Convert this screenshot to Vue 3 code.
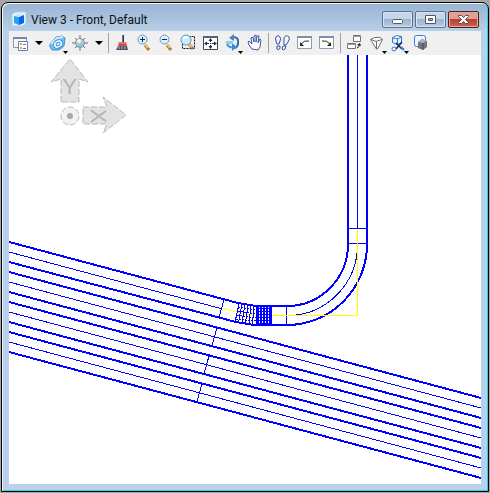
<script setup>
const slope = 126 / 472
const left = 9
const right = 481
const yAt = (start, x) => start + (x - left) * slope

const runs = [272, 302, 332].flatMap((y) => [
  { y, thick: true },
  { y: y + 10, thick: false },
  { y: y + 20, thick: true },
])

const joints = [
  [224, 299, 219, 318],
  [217, 327, 212, 346],
  [209, 356, 204, 374],
  [202, 383, 197, 402],
]

const meshColumns = [258, 261, 264, 267, 270]
const meshRows = [308, 311, 314, 317, 320, 323]
const fan = [0, 1, 2, 3, 4, 5, 6].map((i) => [239 + i * 3, 304 + (i > 2 ? 1 : 0), 235 + i * 3.5, 322 + i / 3])
</script>

<template>
  <main class="window">
    <header class="titlebar">
      <svg class="app-icon" viewBox="0 0 16 16" aria-hidden="true">
        <path d="M1 3 5 1h10v12l-3 2H1z" fill="#e6f3fb" stroke="#a9cfe8" />
        <path d="M3 5 6 3h7l-3 2z" fill="#bfe8ff" />
        <path d="M3 5l5 1v8l-5-2z" fill="#27a2f5" />
        <path d="M8 6l5-2v8l-5 2z" fill="#0969dc" />
      </svg>
      <h1>View 3 - Front, Default</h1>
      <div class="controls">
        <button class="control" aria-label="Minimize">
          <svg viewBox="0 0 28 15"><rect x="9.500" y="7.500" width="10" height="4" rx="1" fill="#fff" stroke="#505866" /></svg>
        </button>
        <button class="control" aria-label="Maximize">
          <svg viewBox="0 0 28 15"><path d="M9.500 3.500h10v8h-10zM12.500 6.500v2h4v-2z" fill="#fff" fill-rule="evenodd" stroke="#505866" /></svg>
        </button>
        <button class="control close" aria-label="Close">
          <svg viewBox="0 0 28 15"><path d="M9.500 3.500h3l2 2 2-2h3v1l-3 3 3 3v1h-3l-2-2-2 2h-3v-1l3-3-3-3z" fill="#fff" stroke="#5c4a55" /></svg>
        </button>
      </div>
    </header>

    <nav class="toolbar" aria-label="View tools">
      <button class="tool" aria-label="View attributes">
        <svg viewBox="0 0 22 24">
          <path d="M4.500 6.500h13v10h-13z" fill="#f5f6fa" stroke="#8c96b4" />
          <path d="M4 6h14v2H4z" fill="#7885aa" />
          <path d="M9.500 10.500h9v9h-9z" fill="#fff" stroke="#7080ad" />
          <path d="M11 12h2v2h-2zM11 16h2v2h-2z" fill="#f2a33a" />
          <path d="M14 13.500h3M14 17.500h3" stroke="#3287d8" />
        </svg>
      </button>
      <button class="tool drop" aria-label="View attributes options">
        <svg viewBox="0 0 15 24"><path d="M4 10h8l-4 4z" fill="#000" /></svg>
      </button>
      <button class="tool" aria-label="Display style">
        <svg viewBox="0 0 22 24">
          <path d="M4 13 10 6l6-1 3 2-1 8-5 4H6l-2-3z" fill="#6fc2f0" stroke="#4a8cc8" />
          <path d="M5 13 11 7l6-1" fill="none" stroke="#c8eeff" stroke-width="2" />
          <ellipse cx="12" cy="13" rx="5" ry="4" transform="rotate(-35 12 13)" fill="#e4f7ff" stroke="#3a93d8" />
          <ellipse cx="12" cy="13" rx="2" ry="1.500" transform="rotate(-35 12 13)" fill="#fff" stroke="#3a93d8" />
          <path d="M17 20h5l-2.500 3z" fill="#000" />
        </svg>
      </button>
      <button class="tool" aria-label="Adjust brightness">
        <svg viewBox="0 0 22 24">
          <path d="M12 4v16M4 12h16M7 7l10 10M17 7 7 17" stroke="#6c7276" />
          <circle cx="12" cy="12" r="4.500" fill="#b3c8d0" stroke="#84939a" />
          <circle cx="11" cy="10" r="2" fill="#f1fbfd" />
          <path d="M10 15q3 1 5-2" fill="none" stroke="#53c2d5" />
        </svg>
      </button>
      <button class="tool drop" aria-label="Brightness options">
        <svg viewBox="0 0 15 24"><path d="M5 10h8l-4 4z" fill="#000" /></svg>
      </button>
      <span class="separator"></span>
      <button class="tool" aria-label="Update view">
        <svg viewBox="0 0 22 24">
          <path d="M11 4h2v8h-2z" fill="#687489" />
          <path d="M12 4h1v8h-1z" fill="#28344a" />
          <path d="M8 11h7l1 4H7z" fill="#d44c42" />
          <path d="M7 12h8" stroke="#f2a098" />
          <path d="M7 15h9l1 4H5z" fill="#4b5666" />
          <path d="M8 15v3M11 15v3M14 15v3" stroke="#a8b2bd" />
        </svg>
      </button>
      <button class="tool" aria-label="Zoom in">
        <svg viewBox="0 0 22 24">
          <path d="m12 14 4 5" stroke="#b5763c" stroke-width="3" />
          <path d="m12 13 3 4" stroke="#f0c273" stroke-width="2" />
          <circle cx="9.500" cy="8.500" r="4.500" fill="#d8f1ff" stroke="#7797ba" />
          <path d="M7 8.500h5M9.500 6v5" stroke="#152855" stroke-width="1" />
        </svg>
      </button>
      <button class="tool" aria-label="Zoom out">
        <svg viewBox="0 0 22 24">
          <path d="m12 14 4 5" stroke="#b5763c" stroke-width="3" />
          <path d="m12 13 3 4" stroke="#f0c273" stroke-width="2" />
          <circle cx="9.500" cy="8.500" r="4.500" fill="#d8f1ff" stroke="#7797ba" />
          <path d="M7 8.500h5" stroke="#152855" />
        </svg>
      </button>
      <button class="tool" aria-label="Window area">
        <svg viewBox="0 0 22 24">
          <path d="M5.500 5.500h12v12h-12z" fill="none" stroke="#111" stroke-dasharray="2 1" />
          <path d="m12 13 4 5" stroke="#b5763c" stroke-width="3" />
          <path d="m12 13 3 3" stroke="#f0c273" stroke-width="2" />
          <circle cx="9" cy="9" r="5" fill="#c9ecff" stroke="#6696bd" />
          <path d="M6 8q2-3 5-1" fill="none" stroke="#fff" stroke-width="2" />
        </svg>
      </button>
      <button class="tool" aria-label="Fit view">
        <svg viewBox="0 0 22 24">
          <path d="M4.500 5.500h14v13h-14z" fill="#fff" stroke="#3a4560" />
          <path d="M4 5h15v2H4z" fill="#56627c" />
          <path d="M11.500 8v3M11.500 14v3M6 12.500h4M13 12.500h4" stroke="#222b3c" />
          <path d="m9.500 10 2-3 2 3zM9.500 15l2 3 2-3zM8 10.500l-3 2L8 14.500zM15 10.500l3 2-3 2z" fill="#222b3c" />
          <path d="M11 12h1v1h-1z" fill="#222b3c" />
        </svg>
      </button>
      <button class="tool" aria-label="Rotate view">
        <svg viewBox="0 0 22 24">
          <path d="M12 6q6 0 5 6 0 4-3 5" fill="none" stroke="#356ba9" stroke-width="2" />
          <path d="m13 3-5 4 5 3z" fill="#4d83bd" />
          <path d="M6 13q2 4 6 3" fill="none" stroke="#3a9fd7" stroke-width="2" />
          <path d="m11 12 5 4-5 4z" fill="#3a91ce" />
          <path d="M5 10h7v3H5z" fill="#86d1ef" />
          <path d="M17 20h5l-2.500 3z" fill="#000" />
        </svg>
      </button>
      <button class="tool" aria-label="Pan view">
        <svg viewBox="0 0 22 24">
          <path d="M9 18 6 14l-1-3 1-1 3 3-1-6 1-1 1 1 1 4V5l2-1v7l1-6 2 0-1 7 2-4 1 1-1 7-2 3z" fill="#fff" stroke="#3b59a8" />
        </svg>
      </button>
      <span class="separator"></span>
      <button class="tool" aria-label="Walk">
        <svg viewBox="0 0 22 24" fill="#f2f7ff" stroke="#33519e">
          <path d="M5 6q2-3 4 0 1 2 0 4l-1 3H6L5 10q-1-2 0-4zM7 15h2v2q-1 3-3 1v-3zM13 7q2-4 5-1 1 2-1 5l-2 3h-2zM12 15h3l-1 3q-2 2-3 0z" />
        </svg>
      </button>
      <button class="tool" aria-label="View previous">
        <svg viewBox="0 0 22 24">
          <path d="M4.500 5.500h14v12h-14z" fill="#fff" stroke="#939cb5" /><path d="M4 5h15v2H4z" fill="#7f8dae" />
          <path d="M8 13q3-4 8-3" fill="none" stroke="#272727" /><path d="M7 11v4h4z" fill="#272727" />
        </svg>
      </button>
      <button class="tool" aria-label="View next">
        <svg viewBox="0 0 22 24">
          <path d="M4.500 5.500h14v12h-14z" fill="#fff" stroke="#939cb5" /><path d="M4 5h15v2H4z" fill="#7f8dae" />
          <path d="M15 13q-3-4-8-3" fill="none" stroke="#272727" /><path d="M16 11v4h-4z" fill="#272727" />
        </svg>
      </button>
      <span class="separator"></span>
      <button class="tool" aria-label="Copy view">
        <svg viewBox="0 0 22 24" fill="#fff" stroke="#707070">
          <path d="M10.500 4.500h7v6h-7zM4.500 12.500h8v5h-8z" />
          <path d="M10 5.500h8M4 13.500h9" stroke="#999" />
          <path d="M14 17q3-1 2-4" fill="none" stroke="#222" /><path d="m14 14 3-2 1 3z" fill="#222" stroke="none" />
        </svg>
      </button>
      <button class="tool" aria-label="View perspective">
        <svg viewBox="0 0 22 24" fill="#fff" stroke="#707070">
          <path d="m5.500 8.500 4-2h6l2 2-5 9.500h-1zM6 8.500l5 2 6-2M11.500 10.500V18" />
          <path d="M17 20h5l-2.500 3z" fill="#000" stroke="none" />
        </svg>
      </button>
      <button class="tool" aria-label="Clip volume">
        <svg viewBox="0 0 22 24">
          <path d="m5.500 6.500 4-2 5 1v6l-4 2-5-2z" fill="#e3f2ff" stroke="#2f79d4" />
          <path d="m6 7 5 1 3-2M10.500 8v5" fill="none" stroke="#2f79d4" />
          <path d="m9 12 6 6M15 11l-6 7" stroke="#182d4d" stroke-width="1.500" />
          <circle cx="7" cy="18" r="2" fill="#fff" stroke="#2f79d4" /><path d="m14 16 3 3" stroke="#2f79d4" stroke-width="2" />
          <path d="M17 20h5l-2.500 3z" fill="#000" />
        </svg>
      </button>
      <button class="tool" aria-label="Clip mask">
        <svg viewBox="0 0 22 24">
          <rect x="5.500" y="4.500" width="11" height="11" rx="2" fill="#eef6ff" stroke="#347ddc" stroke-width="1" />
          <path d="m9 11 4-3 5 2v6l-4 3-5-2z" fill="#72757d" />
          <path d="m9 11 4-3 5 2-4 2z" fill="#b2b4b9" /><path d="M14 12v7" stroke="#45484d" />
        </svg>
      </button>
    </nav>

    <section class="canvas">
      <svg viewBox="9 55 472 429" role="img" aria-label="Front view of pipework">
        <g class="triad">
          <path d="M61 102V79l-10 3 19-23 18 23-9-3v23z" />
          <path d="M83 107h24l-4-10 23 18-23 18 4-9H83z" />
          <circle cx="70" cy="116" r="9" />
          <circle class="dot" cx="70" cy="116" r="3" />
          <text x="69.500" y="94">Y</text>
          <text x="0" y="8" transform="translate(99 116) rotate(90)">X</text>
        </g>

        <g class="thin">
          <path v-for="(j, i) in joints" :key="i" :d="`M${j[0]} ${j[1]}L${j[2]} ${j[3]}`" />
          <path :d="`M9 252L221 ${yAt(252, 221)}`" />
          <path
            v-for="r in runs.filter((r) => !r.thick)"
            :key="r.y"
            :d="`M${left} ${r.y}L${right} ${yAt(r.y, right)}`"
          />
          <path d="M357.500 55V228M287 315.500A70 71 0 0 0 357.500 244" />
          <path d="M348 228.500h19M348 243.500h19M271.500 305v20M286.500 305v20" />
        </g>

        <g class="thick">
          <path
            v-for="r in runs.filter((r) => r.thick)"
            :key="r.y"
            :d="`M${left} ${r.y}L${right} ${yAt(r.y, right)}`"
          />
          <path d="M9 242 238 303 256 306H287A61 62 0 0 0 348 244V55" />
          <path d="M9 262 236 322 254 325H287A80 81 0 0 0 367 244V55" />
        </g>

        <g class="guide">
          <path d="M222 308 244 314 256 315.500M272 315.500H357.500V229" />
        </g>

        <g class="mesh">
          <path v-for="x in meshColumns" :key="x" :d="`M${x} 306V326`" stroke-width="2" />
          <path v-for="y in meshRows" :key="y" :d="`M256 ${y}.5H271`" />
          <path v-for="(f, i) in fan" :key="i" :d="`M${f[0]} ${f[1]}L${f[2]} ${f[3]}`" />
          <path d="M238 307 256 310M238 311 256 314M237 315 256 318M236 319 256 321" stroke-dasharray="2 1" />
        </g>
      </svg>
    </section>
  </main>
</template>

<style>
body {
  margin: 0;
  background: #a7a7a7;
}
</style>

<style scoped>
* {
  box-sizing: border-box;
}

.window {
  display: flex;
  flex-direction: column;
  margin: 2px 1px 1px;
  padding: 0 6px 7px;
  border: 1px solid #000;
  border-radius: 7px 7px 0 0;
  background: linear-gradient(#98b4d2, #b9d1ea 30px);
  box-shadow: inset 1px 1px #eef6fc, inset -1px -1px #22d3ee;
}

.titlebar {
  display: flex;
  align-items: center;
  height: 28px;
  padding: 4px 3px 0;
}

.app-icon {
  width: 16px;
  height: 16px;
}

h1 {
  flex: 1;
  margin: 0 0 0 4px;
  padding-top: 2px;
  font: 400 12px/16px Roboto, "Open Sans", sans-serif;
  color: #111;
}

.controls {
  display: flex;
  gap: 2px;
}

.control {
  width: 31px;
  height: 17px;
  padding: 0;
  border: 1px solid #5c7189;
  border-radius: 2px;
  background: linear-gradient(#c5d6e8 45%, #9cb5cf 50%, #b5cbe2);
  box-shadow: inset 0 0 0 1px #d7e5f2;
}

.control svg {
  display: block;
  width: 28px;
  height: 15px;
}

.close {
  border-color: #4e1d1d;
  background: linear-gradient(#dda092 45%, #bc3f2b 50%, #cf6450);
  box-shadow: inset 0 0 0 1px #e5a99d;
}

.toolbar {
  display: flex;
  height: 24px;
  margin: 0 1px;
  background: #f0f0f0;
}

.tool {
  width: 22px;
  height: 24px;
  padding: 0;
  border: 0;
  background: none;
}

.tool svg {
  display: block;
  width: 100%;
  height: 100%;
}

.drop {
  width: 15px;
}

.separator {
  width: 1px;
  height: 20px;
  margin: 2px 2px 2px 3px;
  background: #a0a0a0;
}

.canvas {
  flex: 1;
  margin: 0 1px;
  background: #fff;
}

.canvas svg {
  display: block;
  width: 100%;
}

.thin,
.thick,
.mesh,
.guide {
  fill: none;
  stroke: #00f;
  shape-rendering: crispEdges;
}

.thick {
  stroke-width: 2;
}

.guide {
  stroke: #ff0;
}

.triad path,
.triad circle {
  fill: #e3e3e3;
  stroke: #b8b8b8;
  stroke-dasharray: 6 2;
}

.triad circle {
  fill: #f2f2f2;
}

.triad .dot {
  fill: #a8a8a8;
  stroke: none;
}

.triad text {
  font: 22px "Liberation Sans", Arial, sans-serif;
  fill: #b4b4b4;
  text-anchor: middle;
}
</style>
